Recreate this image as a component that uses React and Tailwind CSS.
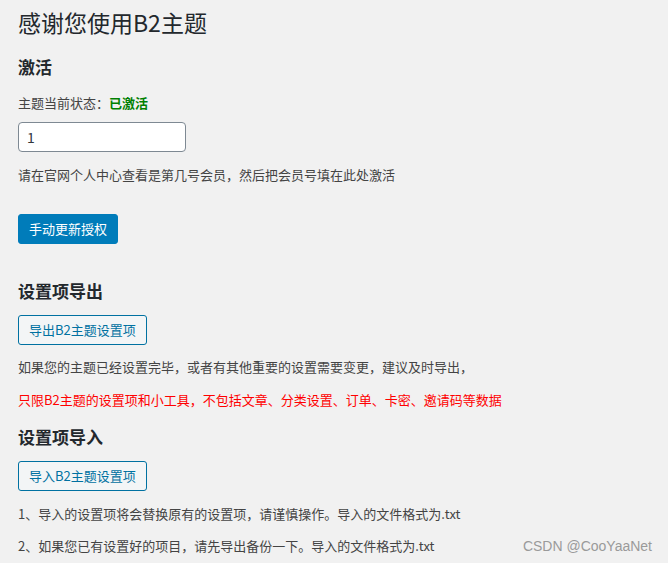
import React from 'react';

const font = { fontFamily: '"Noto Sans CJK SC", "Noto Sans", sans-serif' };

const SecondaryButton = ({ children }) => (
  <button className="h-[30px] rounded-[3px] border border-[#0071a1] bg-[#f3f5f6] px-[10px] text-[13px] leading-[28px] text-[#0071a1]">
    {children}
  </button>
);

const App = () => {
  return (
    <div className="relative h-[563px] w-[668px] overflow-hidden bg-[#f1f1f1] px-[18px]" style={font}>
      <h1 className="pt-[8px] text-[23px] font-normal leading-[29px] text-[#23282d]">感谢您使用B2主题</h1>

      <h2 className="mt-[18px] text-[17px] font-semibold leading-[24px] text-[#23282d]">激活</h2>
      <p className="mt-[14px] text-[13px] leading-[20px] text-[#444]">
        主题当前状态：<span className="font-semibold text-[#008000]">已激活</span>
      </p>
      <input
        className="mt-[9px] block h-[30px] w-[168px] rounded-[4px] border border-[#7e8993] bg-white px-[8px] text-[14px] text-[#32373c] outline-none"
        defaultValue="1"
      />
      <p className="mt-[13px] text-[13px] leading-[20px] text-[#444]">请在官网个人中心查看是第几号会员，然后把会员号填在此处激活</p>
      <button className="mt-[29px] h-[30px] rounded-[3px] border border-[#007cba] bg-[#007cba] px-[10px] text-[13px] leading-[28px] text-white">
        手动更新授权
      </button>

      <h2 className="mt-[35px] text-[17px] font-semibold leading-[24px] text-[#23282d]">设置项导出</h2>
      <div className="mt-[12px]">
        <SecondaryButton>导出B2主题设置项</SecondaryButton>
      </div>
      <p className="mt-[12px] text-[13px] leading-[20px] text-[#444]">如果您的主题已经设置完毕，或者有其他重要的设置需要变更，建议及时导出，</p>
      <p className="mt-[13px] text-[13px] leading-[20px] text-[#ff0000]">只限B2主题的设置项和小工具，不包括文章、分类设置、订单、卡密、邀请码等数据</p>

      <h2 className="mt-[15px] text-[17px] font-semibold leading-[24px] text-[#23282d]">设置项导入</h2>
      <div className="mt-[12px]">
        <SecondaryButton>导入B2主题设置项</SecondaryButton>
      </div>
      <p className="mt-[13px] text-[13px] leading-[20px] text-[#444]">1、导入的设置项将会替换原有的设置项，请谨慎操作。导入的文件格式为.txt</p>
      <p className="mt-[12px] text-[13px] leading-[20px] text-[#444]">2、如果您已有设置好的项目，请先导出备份一下。导入的文件格式为.txt</p>

      <div className="absolute bottom-[6px] right-[16px] text-[14px] text-[#9a9a9a]" style={{ fontFamily: '"Liberation Sans", Arial, sans-serif' }}>
        CSDN @CooYaaNet
      </div>
    </div>
  );
};

export default App;
